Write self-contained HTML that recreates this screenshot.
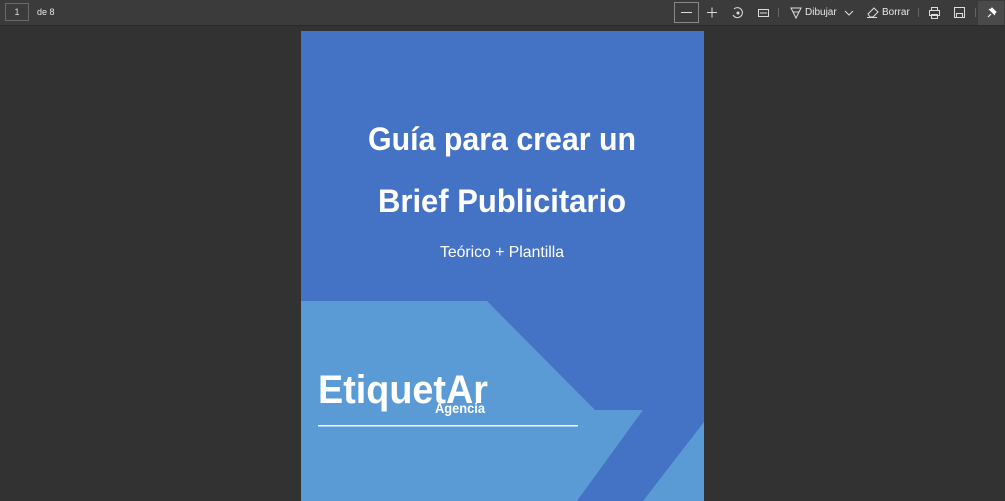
<!DOCTYPE html>
<html><head><meta charset="utf-8"><style>
html,body{margin:0;padding:0;background:#323232;width:1005px;height:501px;overflow:hidden;font-family:"Liberation Sans",sans-serif}
.tb{position:absolute;left:0;top:0;width:1005px;height:25px;background:#3b3b3b;border-bottom:1px solid #2a2a2a}
.t{position:absolute;color:#e8e8e8;font-size:10px}
</style></head><body>
<div class="tb">
<div style="position:absolute;left:5px;top:3px;width:24px;height:18px;border:1px solid #6a6a6a;box-sizing:border-box;color:#ddd;font-size:9px;text-align:center;line-height:16px">1</div>
<div class="t" style="left:37px;top:7px;font-size:9px">de 8</div>
<svg style="position:absolute;left:665px;top:0" width="340" height="26" viewBox="0 0 340 26" fill="none" stroke="#ddd" stroke-width="1">
<rect x="9.5" y="2.5" width="24" height="20" stroke="#888"/>
<line x1="16" y1="12.5" x2="27" y2="12.5"/>
<line x1="42" y1="12.5" x2="52" y2="12.5"/><line x1="47" y1="7.5" x2="47" y2="17.5"/>
<path d="M69 9 A5 5 0 1 1 68 15"/><circle cx="73" cy="13" r="1" fill="#ddd"/>
<rect x="93.5" y="9.5" width="10" height="7"/><line x1="95" y1="13" x2="102" y2="13"/>
<line x1="113.5" y1="8" x2="113.5" y2="17" stroke="#666"/>
<path d="M126 8 L136 8 L131 18 Z M128 12 L134 12"/>
<path d="M180 11 L184 15 L188 11"/>
<path d="M203 14 L209 8 L213 12 L208 17 L205 17 Z"/><line x1="202" y1="17.5" x2="212" y2="17.5"/>
<line x1="253.5" y1="8" x2="253.5" y2="17" stroke="#666"/>
<rect x="264.5" y="10.5" width="10" height="5"/><rect x="266.5" y="7.5" width="6" height="3"/><rect x="266.5" y="14.5" width="6" height="4"/>
<rect x="289.5" y="7.5" width="10" height="10"/><rect x="291.5" y="13.5" width="6" height="4"/>
<line x1="310.5" y1="8" x2="310.5" y2="17" stroke="#666"/>
<rect x="313" y="1" width="26" height="24" fill="#4a4a4a" stroke="none"/>
<path d="M323 17 L326 14 M324 9 L330 15 M327 8 L331 12 L329 14 L325 10 Z" stroke="#fff" fill="#fff"/>
</svg>
<div class="t" style="left:805px;top:7px">Dibujar</div>
<div class="t" style="left:882px;top:7px">Borrar</div>
</div>
<svg style="position:absolute;left:301px;top:31px" width="403" height="470" viewBox="0 0 403 470">
<rect width="403" height="470" fill="#4472c4"/>
<polygon points="0,270 186,270 294,379 342,379 276,470 0,470" fill="#5b9bd5"/>
<polygon points="403,391 403,470 342,470" fill="#5b9bd5"/>
<g fill="#fff" font-family="Liberation Sans, sans-serif" font-weight="bold" text-anchor="middle">
<text x="201" y="119" font-size="32" textLength="268" lengthAdjust="spacingAndGlyphs">Guía para crear un</text>
<text x="201" y="181" font-size="32" textLength="248" lengthAdjust="spacingAndGlyphs">Brief Publicitario</text>
<text x="201" y="226" font-size="16" font-weight="normal" textLength="124" lengthAdjust="spacingAndGlyphs">Teórico + Plantilla</text>
<text x="17" y="372" font-size="40" text-anchor="start" textLength="170" lengthAdjust="spacingAndGlyphs">EtiquetAr</text>
<text x="134" y="382" font-size="14" text-anchor="start" textLength="50" lengthAdjust="spacingAndGlyphs">Agencia</text>
</g>
<rect x="17" y="394" width="260" height="1.5" fill="#fff"/>
</svg>
</body></html>
